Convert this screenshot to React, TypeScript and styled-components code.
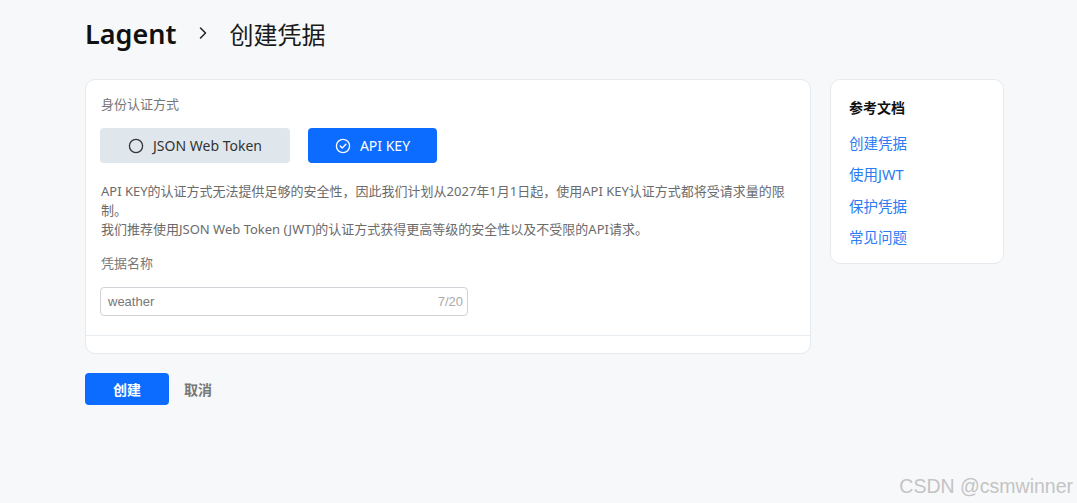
import React, { useState } from 'react';
import styled, { createGlobalStyle } from 'styled-components';

const GlobalStyle = createGlobalStyle`
    body {
        margin: 0;
        background: #f7f8f9;
        font-family: "Noto Sans", "Noto Sans CJK SC", sans-serif;
    }
`;

const Page = styled.div`
    position: relative;
    width: 1077px;
    height: 503px;
    padding: 12px 0 0 85px;
    box-sizing: border-box;
`;

const Breadcrumb = styled.div`
    display: flex;
    align-items: center;
    height: 42px;
    margin-bottom: 25px;
`;

const Brand = styled.span`
    font-size: 27px;
    font-weight: 600;
    color: #111;
`;

const Chevron = styled.span`
    display: flex;
    margin: 0 20px 0 21px;
    color: #222;
`;

const PageTitle = styled.span`
    font-size: 24px;
    color: #1a1a1a;
    font-family: "Noto Sans CJK SC", sans-serif;
`;

const Row = styled.div`
    display: flex;
    align-items: flex-start;
    gap: 19px;
`;

const Card = styled.div`
    background: #fff;
    border: 1px solid #e6eaee;
    border-radius: 10px;
    box-sizing: border-box;
`;

const MainCard = styled(Card)`
    width: 726px;
`;

const CardBody = styled.div`
    padding: 14px 14px 19px 14px;
    border-bottom: 1px solid #e8edf2;
`;

const CardFoot = styled.div`
    height: 17px;
`;

const FieldLabel = styled.div`
    font-size: 13px;
    color: #777;
    line-height: 20px;
    padding-left: 1px;
`;

const AuthSwitch = styled.div`
    display: flex;
    gap: 18px;
    margin: 14px 0 19px;
`;

const AuthButton = styled.button<{ $active?: boolean }>`
    display: flex;
    align-items: center;
    justify-content: center;
    gap: 9px;
    height: 35px;
    width: ${p => (p.$active ? '129px' : '190px')};
    border: none;
    border-radius: 4px;
    background: ${p => (p.$active ? '#0b6cff' : '#e0e7ec')};
    color: ${p => (p.$active ? '#fff' : '#333')};
    font-family: "Noto Sans", sans-serif;
    font-size: 14px;
    cursor: pointer;
`;

const Notice = styled.p`
    margin: 0;
    font-size: 13px;
    line-height: 19px;
    color: #6b6b6b;
    padding-left: 1px;
`;

const NameLabel = styled(FieldLabel)`
    margin-top: 14px;
`;

const InputBox = styled.div`
    display: flex;
    align-items: center;
    width: 368px;
    height: 29px;
    margin-top: 14px;
    border: 1px solid #cfd3d8;
    border-radius: 4px;
    box-sizing: border-box;
    padding: 0 4px 0 7px;
`;

const Input = styled.input`
    flex: 1;
    border: none;
    outline: none;
    font-size: 13px;
    color: #777;
    font-family: "Liberation Sans", sans-serif;
    padding: 0;
    background: transparent;
`;

const Counter = styled.span`
    font-size: 13px;
    color: #aaa;
    font-family: "Liberation Sans", sans-serif;
`;

const SideCard = styled(Card)`
    width: 174px;
    padding: 17px 18px 10px;
`;

const SideTitle = styled.div`
    font-size: 14px;
    font-weight: 700;
    color: #111;
    margin-bottom: 11px;
    font-family: "Noto Sans CJK SC", sans-serif;
`;

const DocLink = styled.a`
    display: block;
    font-size: 14.5px;
    line-height: 31.3px;
    color: #2b7bf3;
    text-decoration: none;
    font-family: "Noto Sans", "Noto Sans CJK SC", sans-serif;
`;

const Actions = styled.div`
    display: flex;
    align-items: center;
    gap: 15px;
    margin-top: 19px;
`;

const PrimaryButton = styled.button`
    width: 84px;
    height: 32px;
    border: none;
    border-radius: 4px;
    background: #0b6cff;
    color: #fff;
    font-size: 14px;
    font-weight: 700;
    font-family: "Noto Sans CJK SC", sans-serif;
    cursor: pointer;
`;

const TextButton = styled.button`
    border: none;
    background: none;
    padding: 0;
    color: #777;
    font-size: 14px;
    font-weight: 700;
    font-family: "Noto Sans CJK SC", sans-serif;
    cursor: pointer;
`;

const Watermark = styled.div`
    position: absolute;
    right: 4px;
    bottom: 5px;
    font-family: "Liberation Sans", sans-serif;
    font-size: 19.5px;
    color: #c4c4c4;
`;

const ChevronIcon = () => (
    <svg width="12" height="14" viewBox="0 0 12 14" fill="none">
        <path d="M3.5 2 L8.5 7 L3.5 12" stroke="currentColor" strokeWidth="1.5" strokeLinecap="round" strokeLinejoin="round" />
    </svg>
);

const RadioIcon: React.FC<{ checked: boolean }> = ({ checked }) => (
    <svg width="16" height="16" viewBox="0 0 16 16" fill="none">
        <circle cx="8" cy="8" r="6.6" stroke="currentColor" strokeWidth="1.3" />
        {checked && (
            <path d="M5.2 8.1 L7.2 10 L10.9 6.2" stroke="currentColor" strokeWidth="1.4" strokeLinecap="round" strokeLinejoin="round" />
        )}
    </svg>
);

const docs = ['创建凭据', '使用JWT', '保护凭据', '常见问题'];

const App: React.FC = () => {
    const [mode, setMode] = useState<'jwt' | 'key'>('key');
    const [name, setName] = useState<string>('weather');

    return (
        <Page>
            <GlobalStyle />
            <Breadcrumb>
                <Brand>Lagent</Brand>
                <Chevron><ChevronIcon /></Chevron>
                <PageTitle>创建凭据</PageTitle>
            </Breadcrumb>
            <Row>
                <MainCard>
                    <CardBody>
                        <FieldLabel>身份认证方式</FieldLabel>
                        <AuthSwitch>
                            <AuthButton $active={mode === 'jwt'} onClick={() => setMode('jwt')}>
                                <RadioIcon checked={mode === 'jwt'} />
                                JSON Web Token
                            </AuthButton>
                            <AuthButton $active={mode === 'key'} onClick={() => setMode('key')}>
                                <RadioIcon checked={mode === 'key'} />
                                API KEY
                            </AuthButton>
                        </AuthSwitch>
                        <Notice>
                            API KEY的认证方式无法提供足够的安全性，因此我们计划从2027年1月1日起，使用API KEY认证方式都将受请求量的限制。
                            <br />
                            我们推荐使用JSON Web Token (JWT)的认证方式获得更高等级的安全性以及不受限的API请求。
                        </Notice>
                        <NameLabel>凭据名称</NameLabel>
                        <InputBox>
                            <Input value={name} maxLength={20} onChange={e => setName(e.target.value)} />
                            <Counter>{name.length}/20</Counter>
                        </InputBox>
                    </CardBody>
                    <CardFoot />
                </MainCard>
                <SideCard>
                    <SideTitle>参考文档</SideTitle>
                    {docs.map(d => (
                        <DocLink key={d} href="#">{d}</DocLink>
                    ))}
                </SideCard>
            </Row>
            <Actions>
                <PrimaryButton>创建</PrimaryButton>
                <TextButton>取消</TextButton>
            </Actions>
            <Watermark>CSDN @csmwinner</Watermark>
        </Page>
    );
};

export default App;
